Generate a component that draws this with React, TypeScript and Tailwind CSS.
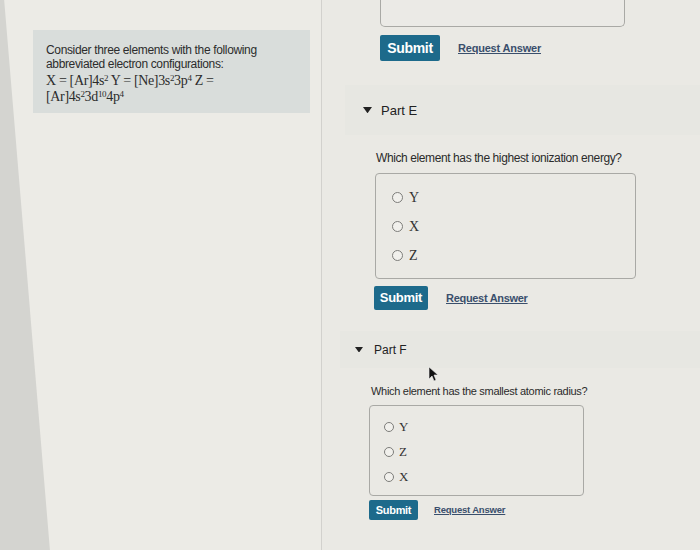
import React from "react";

const sans = { fontFamily: '"Liberation Sans", Arial, sans-serif' };
const serif = { fontFamily: '"Liberation Serif", "Times New Roman", serif' };

function Radio({ size }: { size: number }) {
  return (
    <span
      className="inline-block rounded-full border border-[#7d7d7a] bg-[#f1f0ec]"
      style={{ width: size, height: size }}
    />
  );
}

function Triangle({ w }: { w: number }) {
  return (
    <svg width={w} height={w * 0.7} viewBox="0 0 10 7">
      <path d="M0 0 L10 0 L5 7 Z" fill="#222" />
    </svg>
  );
}

export default function App() {
  return (
    <div
      className="relative w-[700px] h-[550px] overflow-hidden bg-[#eae9e4] text-[#2a2a2a] flex"
      style={sans}
    >
      {/* left photo edge */}
      <div
        className="absolute left-0 top-0 w-[52px] h-[550px] bg-[#d4d4d0]"
        style={{ clipPath: "polygon(0 0, 8% 0, 96% 100%, 0 100%)" }}
      />

      {/* left column */}
      <div className="w-[322px] shrink-0 border-r border-[#d2d1cd] bg-[#ecebe6] pt-[30px] pl-[33px] pr-[12px]">
        <div className="bg-[#d9dddb] w-[277px] h-[83px] pl-[13px] pt-[13px] text-[12px] leading-[14px] text-[#2c2c2c] tracking-[-0.35px]">
          <div>Consider three elements with the following</div>
          <div>abbreviated electron configurations:</div>
          <div className="text-[14px] leading-[17px] mt-[1px]" style={serif}>
            X = [Ar]4s<sup className="text-[9px]">2</sup> Y = [Ne]3s
            <sup className="text-[9px]">2</sup>3p<sup className="text-[9px]">4</sup> Z =
          </div>
          <div className="text-[14px] leading-[15px]" style={serif}>
            [Ar]4s<sup className="text-[9px]">2</sup>3d<sup className="text-[9px]">10</sup>4p
            <sup className="text-[9px]">4</sup>
          </div>
        </div>
      </div>

      {/* right column */}
      <div className="flex-1 flex flex-col">
        {/* top previous box */}
        <div className="ml-[58px] w-[245px] h-[27px] border border-t-0 border-[#a9a9a5] rounded-b-[5px] bg-[#ebeae6]" />

        <div className="ml-[58px] mt-[8px] flex items-center">
          <div className="w-[60px] h-[26px] rounded-[2px] bg-[#1d6a8b] text-white text-[14px] font-bold flex items-center justify-center tracking-[-0.3px]">
            Submit
          </div>
          <span className="ml-[18px] text-[11px] font-bold text-[#3a4f6c] underline tracking-[-0.2px]">
            Request Answer
          </span>
        </div>

        {/* Part E */}
        <div className="ml-[23px] mt-[24px] h-[50px] bg-[#e7e7e2] flex items-center pl-[18px]">
          <Triangle w={9} />
          <span className="ml-[9px] text-[13px] text-[#222] mt-[1px]">Part E</span>
        </div>

        <div className="ml-[54px] mt-[16px] text-[12px] text-[#2b2b2b] tracking-[-0.4px] leading-[15px]">
          Which element has the highest ionization energy?
        </div>

        <div className="ml-[53px] mt-[7px] w-[261px] h-[106px] border border-[#a9a9a5] rounded-[4px] pl-[16px] pt-[16px] flex flex-col gap-[15px] text-[14px]" style={serif}>
          {["Y", "X", "Z"].map((l) => (
            <div key={l} className="flex items-center h-[14px]">
              <Radio size={11} />
              <span className="ml-[6px] text-[#333]">{l}</span>
            </div>
          ))}
        </div>

        <div className="ml-[52px] mt-[7px] flex items-center">
          <div className="w-[54px] h-[24px] rounded-[2px] bg-[#1d6a8b] text-white text-[13px] font-bold flex items-center justify-center tracking-[-0.3px]">
            Submit
          </div>
          <span className="ml-[18px] text-[11px] font-bold text-[#3a4f6c] underline tracking-[-0.3px]">
            Request Answer
          </span>
        </div>

        {/* Part F */}
        <div className="ml-[18px] mt-[21px] h-[37px] bg-[#e7e7e2] flex items-center pl-[15px]">
          <Triangle w={8} />
          <span className="ml-[11px] text-[12px] text-[#222] mt-[1px]">Part F</span>
        </div>

        <div className="ml-[49px] mt-[16px] text-[11px] text-[#2b2b2b] tracking-[-0.3px] leading-[14px]">
          Which element has the smallest atomic radius?
        </div>

        <div className="ml-[47px] mt-[7px] w-[215px] h-[91px] border border-[#a9a9a5] rounded-[4px] pl-[14px] pt-[14px] flex flex-col gap-[12px] text-[13px]" style={serif}>
          {["Y", "Z", "X"].map((l) => (
            <div key={l} className="flex items-center h-[13px]">
              <Radio size={10} />
              <span className="ml-[5px] text-[#333]">{l}</span>
            </div>
          ))}
        </div>

        <div className="ml-[47px] mt-[4px] flex items-center">
          <div className="w-[49px] h-[20px] rounded-[2px] bg-[#1d6a8b] text-white text-[11px] font-bold flex items-center justify-center tracking-[-0.3px]">
            Submit
          </div>
          <span className="ml-[16px] text-[9.5px] font-bold text-[#3a4f6c] underline tracking-[-0.2px]">
            Request Answer
          </span>
        </div>
      </div>

      {/* cursor */}
      <svg className="absolute left-[428px] top-[366px]" width="10" height="16" viewBox="0 0 10 16">
        <path d="M1 1 L1 13 L4 10 L6 15 L8 14 L6 9 L10 9 Z" fill="#111" stroke="#eee" strokeWidth="0.6" />
      </svg>
    </div>
  );
}
